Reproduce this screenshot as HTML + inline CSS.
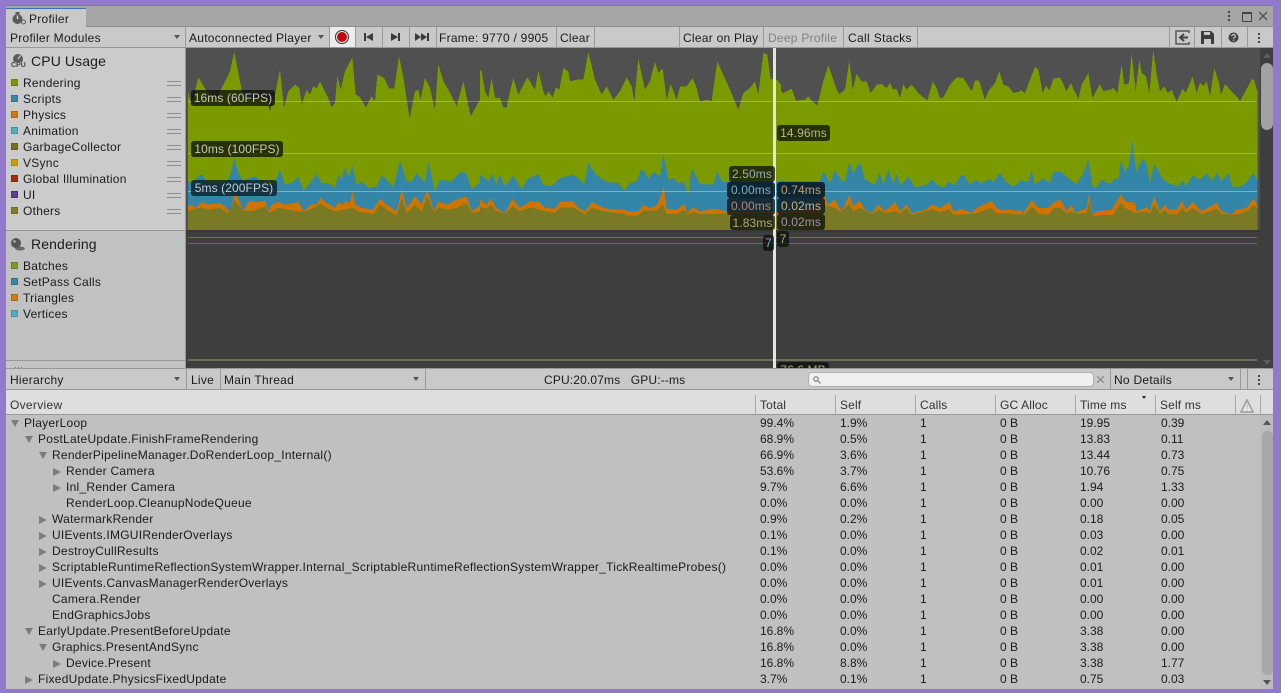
<!DOCTYPE html>
<html><head><meta charset="utf-8"><style>
html,body{margin:0;padding:0;width:1281px;height:693px;overflow:hidden;background:#9279cc}
body{font-family:"Liberation Sans",sans-serif;font-size:12px;color:#1a1a1a;position:relative;letter-spacing:.26px}
div,span,svg{position:absolute}
.t{white-space:nowrap;line-height:16px;height:16px}
.b{background:#c9c9c9}
.s{width:1px;background:#999}
.sw{width:7px;height:7px;left:11px;border:1px solid rgba(0,0,0,.15);box-sizing:border-box}
.h1,.h2{left:167px;width:14px;height:1px;background:#8f8f8f}
.ar{width:0;height:0;border-left:3.5px solid transparent;border-right:3.5px solid transparent;border-top:4px solid #555}
.dn{width:0;height:0;border-left:4.5px solid transparent;border-right:4.5px solid transparent;border-top:7px solid #7c7c7c}
.rt{width:0;height:0;border-top:4px solid transparent;border-bottom:4px solid transparent;border-left:8px solid #7c7c7c}
.l{border-radius:3px;background:rgba(10,12,8,.74);height:16px;line-height:16px;font-size:12px;white-space:nowrap;text-align:center;letter-spacing:.1px}
.r{left:0;width:1281px;height:16px}
.r span{white-space:nowrap;line-height:16px;top:0}
.a,.c,.d,.e,.f,.g{letter-spacing:0}
.a{left:760px}.c{left:840px}.d{left:920px}.e{left:1000px}.f{left:1080px}.g{left:1161px}
.hd{top:397px;line-height:16px;color:#333;white-space:nowrap;letter-spacing:.15px}
.sp{width:1px;background:#a8a8a8;top:395px;height:19px}
</style></head><body>

<!-- window -->
<div style="left:6px;top:5px;width:1267px;height:684px;background:#c0c0c0"></div>
<div style="left:6px;top:6px;width:1267px;height:21px;background:#a5a5a5"></div>
<div style="left:6px;top:5px;width:1267px;height:1px;background:#85809a"></div>
<div style="left:6px;top:26px;width:1267px;height:1px;background:#8f8f8f"></div>
<div style="left:6px;top:8px;width:80px;height:19px;background:#c9c9c9"></div>
<div style="left:6px;top:8px;width:80px;height:1px;background:#3a72b0"></div>
<svg style="left:11px;top:11px" width="16" height="15" viewBox="0 0 16 15"><circle cx="6.5" cy="8" r="5" fill="#5a5a5a"/><rect x="4.5" y="1" width="4" height="2" fill="#5a5a5a"/><path d="M6.5 8V4.5" stroke="#ddd" stroke-width="1.4"/><circle cx="12.5" cy="11" r="2" fill="none" stroke="#5a5a5a"/></svg>
<div class="t" style="left:29px;top:11px;color:#202020">Profiler</div>
<div style="left:1228px;top:11px;width:2px;height:2px;background:#444;box-shadow:0 4px #444,0 8px #444"></div>
<div style="left:1242px;top:12px;width:8px;height:7px;border:1px solid #444;border-top-width:2px"></div>
<svg style="left:1258px;top:11px" width="10" height="10"><path d="M1 1L9 9M9 1L1 9" stroke="#555" stroke-width="1.3"/></svg>

<!-- top toolbar -->
<div class="b" style="left:6px;top:27px;width:1267px;height:20px"></div>
<div style="left:6px;top:47px;width:1267px;height:1px;background:#999"></div>
<div class="t" style="left:10px;top:30px">Profiler Modules</div>
<div class="ar" style="left:174px;top:35px"></div>
<div class="s" style="left:185px;top:27px;height:20px"></div>
<div class="t" style="left:189px;top:30px">Autoconnected Player</div>
<div class="ar" style="left:318px;top:35px"></div>
<div style="left:330px;top:27px;width:25px;height:20px;background:#ececec"></div>
<div style="left:335px;top:30px;width:12px;height:12px;border:1px solid #333;border-radius:50%"></div>
<div style="left:337px;top:32px;width:10px;height:10px;background:#c00a14;border-radius:50%"></div>
<div class="s" style="left:329px;top:27px;height:20px"></div>
<div class="s" style="left:355px;top:27px;height:20px"></div>
<div class="s" style="left:382px;top:27px;height:20px"></div>
<div class="s" style="left:409px;top:27px;height:20px"></div>
<div class="s" style="left:436px;top:27px;height:20px"></div>
<svg style="left:363px;top:32px" width="68" height="10"><path d="M1 1h2v8H1zM3 5l7-4v8z" fill="#3c3c3c"/><path d="M28 1l7 4-7 4zM35 1h2v8h-2z" fill="#3c3c3c"/><path d="M52 1l6 4-6 4zM58 1l6 4-6 4zM64 1h2v8h-2z" fill="#3c3c3c"/></svg>
<div class="t" style="left:439px;top:30px">Frame: 9770 / 9905</div>
<div class="s" style="left:556px;top:27px;height:20px"></div>
<div class="t" style="left:560px;top:30px">Clear</div>
<div class="s" style="left:594px;top:27px;height:20px"></div>
<div class="s" style="left:679px;top:27px;height:20px"></div>
<div class="t" style="left:683px;top:30px">Clear on Play</div>
<div class="s" style="left:763px;top:27px;height:20px"></div>
<div class="t" style="left:768px;top:30px;color:#808080">Deep Profile</div>
<div class="s" style="left:843px;top:27px;height:20px"></div>
<div class="t" style="left:848px;top:30px;letter-spacing:.35px">Call Stacks</div>
<div class="s" style="left:917px;top:27px;height:20px"></div>
<div class="s" style="left:1169px;top:27px;height:20px"></div>
<div class="s" style="left:1194px;top:27px;height:20px"></div>
<div class="s" style="left:1221px;top:27px;height:20px"></div>
<div class="s" style="left:1247px;top:27px;height:20px"></div>
<svg style="left:1175px;top:30px" width="15" height="15"><path d="M14 3V1H1v13h13v-2" fill="none" stroke="#555" stroke-width="1.5"/><path d="M13 7.5H6M9 4L5 7.5 9 11" fill="none" stroke="#444" stroke-width="2"/></svg>
<svg style="left:1201px;top:31px" width="13" height="13"><path d="M0 0h10l3 3v10H0z" fill="#3c3c3c"/><rect x="3" y="1" width="6" height="3" fill="#c9c9c9"/><rect x="3" y="8" width="7" height="5" fill="#c9c9c9"/></svg>
<svg style="left:1228px;top:32px" width="11" height="11"><circle cx="5.5" cy="5.5" r="5" fill="#444"/><path d="M3.8 4.2c0-2.2 3.6-2.2 3.6-.1 0 1.4-1.9 1.3-1.9 2.6" stroke="#ccc" fill="none" stroke-width="1.2"/><rect x="4.9" y="7.6" width="1.3" height="1.3" fill="#ccc"/></svg>
<div style="left:1258px;top:33px;width:2px;height:2px;background:#444;box-shadow:0 4px #444,0 8px #444"></div>

<!-- left column -->
<div style="left:6px;top:48px;width:179px;height:183px;background:#cbcbcb"></div>
<div style="left:6px;top:230px;width:179px;height:1px;background:#999"></div>
<div style="left:6px;top:231px;width:179px;height:129px;background:#c1c1c1"></div>
<div style="left:6px;top:360px;width:179px;height:9px;background:#c4c4c4;border-top:1px solid #999;box-sizing:border-box"></div>
<div style="left:185px;top:48px;width:1px;height:321px;background:#999"></div>
<svg style="left:10px;top:52px" width="16" height="12"><circle cx="8" cy="7" r="5" fill="#5a5a5a"/><path d="M8 7l2.5-3.5" stroke="#ccc" stroke-width="1.2"/><rect x="3" y="10" width="10" height="2" fill="#cbcbcb"/></svg>
<div class="t" style="left:11px;top:58px;font-size:7px;color:#444;font-weight:bold;letter-spacing:0">CPU</div>
<div class="t" style="left:31px;top:53px;font-size:14px;color:#1c1c1c;letter-spacing:.12px">CPU Usage</div>
<div class="sw" style="top:79px;background:#7d9a00"></div><div class="t" style="left:23px;top:75px">Rendering</div><div class="h1" style="top:81px"></div><div class="h2" style="top:85px"></div>
<div class="sw" style="top:95px;background:#3a88a8"></div><div class="t" style="left:23px;top:91px">Scripts</div><div class="h1" style="top:97px"></div><div class="h2" style="top:101px"></div>
<div class="sw" style="top:111px;background:#d07a10"></div><div class="t" style="left:23px;top:107px">Physics</div><div class="h1" style="top:113px"></div><div class="h2" style="top:117px"></div>
<div class="sw" style="top:127px;background:#4cb0c0"></div><div class="t" style="left:23px;top:123px">Animation</div><div class="h1" style="top:129px"></div><div class="h2" style="top:133px"></div>
<div class="sw" style="top:143px;background:#7a7020"></div><div class="t" style="left:23px;top:139px">GarbageCollector</div><div class="h1" style="top:145px"></div><div class="h2" style="top:149px"></div>
<div class="sw" style="top:159px;background:#c8a000"></div><div class="t" style="left:23px;top:155px">VSync</div><div class="h1" style="top:161px"></div><div class="h2" style="top:165px"></div>
<div class="sw" style="top:175px;background:#a03010"></div><div class="t" style="left:23px;top:171px">Global Illumination</div><div class="h1" style="top:177px"></div><div class="h2" style="top:181px"></div>
<div class="sw" style="top:191px;background:#5a4090"></div><div class="t" style="left:23px;top:187px">UI</div><div class="h1" style="top:193px"></div><div class="h2" style="top:197px"></div>
<div class="sw" style="top:207px;background:#808020"></div><div class="t" style="left:23px;top:203px">Others</div><div class="h1" style="top:209px"></div><div class="h2" style="top:213px"></div>

<svg style="left:10px;top:236px" width="16" height="16"><ellipse cx="10" cy="12.5" rx="5" ry="2" fill="#6a6a6a"/><circle cx="6" cy="7" r="5" fill="#555"/><circle cx="4.5" cy="5.5" r="1.5" fill="#999"/></svg>
<div class="t" style="left:31px;top:236px;font-size:14px;color:#1c1c1c;letter-spacing:.12px">Rendering</div>
<div class="sw" style="top:262px;background:#7f9a20"></div><div class="t" style="left:23px;top:258px">Batches</div>
<div class="sw" style="top:278px;background:#3a88a8"></div><div class="t" style="left:23px;top:274px">SetPass Calls</div>
<div class="sw" style="top:294px;background:#d07a10"></div><div class="t" style="left:23px;top:290px">Triangles</div>
<div class="sw" style="top:310px;background:#4cb0c0"></div><div class="t" style="left:23px;top:306px">Vertices</div>
<div class="t" style="left:14px;top:358px;font-size:10px;color:#777">...</div>

<!-- charts -->
<div style="left:186px;top:48px;width:1074px;height:183px;background:#505050"></div>
<div style="left:186px;top:231px;width:1074px;height:138px;background:#3e3e3e"></div>
<div style="left:186px;top:230px;width:1074px;height:2px;background:#383838"></div>
<svg style="left:0;top:0" width="1281" height="693" shape-rendering="crispEdges">
<g transform="translate(180 48) scale(.33333)">
<polygon fill="#7b9a00" points="24,546 24,130 35,175 55,88 80,130 110,150 150,70 163,12 180,100 190,150 260,150 270,190 285,140 300,65 312,180 325,130 345,110 358,120 365,170 380,125 390,140 400,115 410,120 420,100 445,150 455,178 465,165 472,85 482,125 495,70 517,28 527,140 538,145 558,178 575,145 585,160 592,80 612,90 628,122 643,122 657,25 672,100 689,212 705,130 715,125 722,155 735,90 750,120 765,185 775,50 790,100 805,125 830,175 850,100 872,205 903,150 903,546"/>
<polygon fill="#3386a8" points="24,546 24,400 35,405 55,385 65,378 80,400 100,405 140,400 150,385 163,330 175,375 190,400 205,390 225,385 258,410 280,410 300,365 315,410 335,405 355,385 370,428 390,405 410,378 425,405 445,405 465,420 475,380 485,395 495,358 505,385 518,355 530,410 545,400 565,420 590,415 605,382 625,400 640,420 660,338 680,400 695,400 710,375 735,405 745,340 765,430 780,395 815,400 845,370 860,378 875,425 903,400 903,546"/>
<polygon fill="#d07400" points="24,546 24,475 35,470 45,480 65,462 85,470 100,468 120,465 135,475 150,495 163,440 172,445 190,490 205,462 220,460 235,462 255,458 265,490 275,470 295,462 315,470 340,465 355,462 370,490 395,468 408,470 422,450 440,465 465,480 475,462 490,470 497,458 510,465 517,430 527,470 545,480 580,485 600,452 620,470 650,490 665,425 680,480 705,445 725,470 742,425 762,490 775,460 800,470 830,455 860,445 875,490 890,480 903,470 903,546"/>
<polygon fill="#7a7a24" points="24,546 24,490 35,485 65,478 85,485 120,480 145,497 163,455 190,490 220,488 255,475 268,495 295,480 340,488 370,492 395,482 422,468 440,480 465,490 490,485 517,480 540,492 580,498 600,470 620,485 650,502 665,450 680,495 705,470 725,490 742,445 762,495 775,478 800,485 830,480 860,465 875,495 903,490 903,546"/>
</g>
<g transform="translate(480 48) scale(.33333)">
<polygon fill="#7b9a00" points="0,546 0,65 5,70 15,130 25,150 35,90 45,150 60,150 70,178 80,178 90,130 100,90 115,140 142,88 165,125 175,68 190,130 197,145 205,130 218,148 228,118 238,125 250,60 265,70 270,100 290,95 310,95 325,12 345,95 365,140 380,115 400,155 420,130 440,88 455,115 463,160 475,33 495,125 510,100 525,42 535,75 548,62 560,155 572,108 590,155 600,115 620,115 638,90 650,120 660,160 680,155 695,160 712,40 725,70 750,125 775,185 790,135 810,120 825,100 835,140 850,15 862,20 872,95 885,90 903,110 903,546"/>
<polygon fill="#3386a8" points="0,546 0,380 25,400 38,378 50,410 58,378 75,415 100,382 125,425 140,395 175,378 190,410 215,415 240,390 280,380 300,395 312,410 325,345 350,382 380,402 415,405 432,428 450,405 470,400 485,360 505,392 520,372 540,385 550,318 565,395 580,390 595,405 610,400 625,437 635,360 660,408 700,410 712,368 725,400 750,400 885,400 903,400 903,546"/>
<polygon fill="#d07400" points="0,546 0,455 20,470 33,450 50,482 75,495 98,452 120,480 150,460 175,460 195,480 225,482 240,462 280,460 295,480 315,490 335,462 370,480 400,485 430,485 445,490 475,490 490,472 510,480 530,472 545,440 550,412 560,482 590,485 612,468 622,495 640,478 660,490 700,482 740,490 885,490 903,490 903,546"/>
<polygon fill="#7a7a24" points="0,546 0,478 20,482 33,470 50,490 75,497 98,475 120,490 150,478 195,490 225,495 240,478 280,478 315,498 335,480 370,490 430,497 445,503 475,503 490,488 530,488 548,470 560,498 590,498 612,485 622,498 640,492 660,498 885,495 903,495 903,546"/>
</g>
<g transform="translate(780 48) scale(.33333)">
<polygon fill="#7b9a00" points="0,546 0,125 10,135 35,122 48,158 75,155 85,145 95,158 112,172 130,100 145,52 160,95 172,130 178,138 195,125 208,38 218,125 230,78 245,100 260,100 272,135 290,110 305,108 320,120 330,105 340,125 350,122 360,150 370,108 380,125 395,110 415,135 442,158 458,100 470,120 480,150 490,148 510,110 530,88 550,90 575,130 585,98 597,98 615,155 625,130 645,105 658,70 670,110 685,115 700,135 723,130 723,546"/>
<polygon fill="#3386a8" points="0,546 0,398 120,400 130,368 150,405 165,365 185,400 195,400 208,342 220,378 235,348 243,350 255,395 285,410 298,375 310,410 325,365 338,405 350,378 362,412 385,385 405,418 440,410 455,395 470,410 490,420 505,402 525,412 542,382 552,382 570,410 585,395 605,405 630,392 640,403 660,375 680,403 700,415 723,400 723,546"/>
<polygon fill="#d07400" points="0,546 0,490 120,480 130,435 145,470 165,455 180,485 190,480 208,440 220,475 240,458 255,485 275,495 295,470 315,490 345,462 360,490 380,470 395,495 440,485 455,470 480,480 508,462 520,490 545,483 575,495 590,480 635,458 650,480 670,488 690,485 723,490 723,546"/>
<polygon fill="#7a7a24" points="0,546 0,495 120,495 130,470 165,480 180,492 208,468 220,490 240,480 275,498 295,485 315,495 345,490 360,497 380,480 395,500 455,485 480,492 508,485 520,500 575,498 590,495 635,480 650,495 690,497 723,500 723,546"/>
</g>
<g transform="translate(1020 48) scale(.33333)">
<polygon fill="#7b9a00" points="0,546 0,125 15,135 45,57 55,65 68,135 78,112 88,128 100,92 120,88 140,130 152,105 175,152 185,110 205,75 217,150 240,108 250,130 270,125 280,120 292,135 305,50 313,110 327,105 335,17 347,130 358,35 365,75 378,85 388,135 400,5 410,80 420,130 433,115 443,135 455,125 470,162 488,122 497,135 518,85 530,135 540,105 550,115 560,100 570,145 583,60 597,105 603,140 615,108 630,125 650,145 660,160 695,95 702,95 712,130 712,546"/>
<polygon fill="#3386a8" points="0,546 0,395 25,402 35,365 45,410 70,390 90,405 100,372 120,370 150,395 170,408 190,375 205,335 218,415 228,420 245,395 270,408 285,390 295,395 303,335 315,372 327,350 337,278 348,370 368,332 380,350 390,405 402,350 415,365 425,390 445,405 475,415 488,395 497,415 518,382 540,395 560,375 575,400 590,375 605,400 625,375 638,417 665,415 680,402 700,375 712,395 712,546"/>
<polygon fill="#d07400" points="0,546 0,482 10,497 35,455 55,480 85,480 102,462 122,455 140,490 155,470 165,495 200,480 207,437 217,500 230,490 275,485 303,438 315,460 345,465 350,490 380,478 390,490 402,445 420,490 435,470 445,485 470,485 487,458 497,485 518,462 545,490 590,465 605,490 635,500 650,485 680,480 700,452 712,470 712,546"/>
<polygon fill="#7a7a24" points="0,546 0,497 15,500 35,475 55,497 85,500 102,480 122,480 140,497 155,490 165,497 200,495 207,460 217,503 280,500 303,465 315,480 345,495 380,490 390,497 402,468 420,497 435,485 445,497 470,500 487,480 497,495 518,480 545,498 590,482 605,498 650,500 680,490 700,472 712,480 712,546"/>
</g>
</svg>
<div style="left:186px;top:48px;width:2px;height:182px;background:#505050"></div>
<div style="left:188px;top:101px;width:1069px;height:1px;background:rgba(255,255,255,.28)"></div>
<div style="left:188px;top:153px;width:1069px;height:1px;background:rgba(255,255,255,.28)"></div>
<div style="left:188px;top:191px;width:1069px;height:1px;background:rgba(255,255,255,.35)"></div>
<div style="left:188px;top:237px;width:1069px;height:1px;background:#74742c"></div>
<div style="left:188px;top:243px;width:1069px;height:1px;background:#2f7f9a"></div>
<div style="left:188px;top:359px;width:1069px;height:2px;background:#66725a"></div>
<div style="left:773px;top:48px;width:3px;height:321px;background:#e6e6d8"></div>

<div class="l" style="left:191px;top:90px;width:84px;color:#c8c8b8">16ms (60FPS)</div>
<div class="l" style="left:191px;top:141px;width:92px;color:#c8c8b8">10ms (100FPS)</div>
<div class="l" style="left:191px;top:180px;width:86px;color:#c0ccd2;background:rgba(8,20,28,.74)">5ms (200FPS)</div>
<div class="l" style="left:777px;top:125px;width:53px;color:#b0b88c">14.96ms</div>
<div class="l" style="left:729px;top:166px;width:46px;color:#94acb8">2.50ms</div>
<div class="l" style="left:727px;top:182px;width:48px;color:#86aabc;background:rgba(5,20,30,.85)">0.00ms</div>
<div class="l" style="left:727px;top:198px;width:48px;color:#b08a80;background:rgba(15,20,25,.8);height:17px">0.00ms</div>
<div class="l" style="left:730px;top:215px;width:45px;color:#a8a888;height:15px">1.83ms</div>
<div class="l" style="left:777px;top:182px;width:48px;color:#c0a070;background:rgba(5,20,30,.85)">0.74ms</div>
<div class="l" style="left:777px;top:198px;width:48px;color:#bdb586;background:rgba(15,20,25,.8)">0.02ms</div>
<div class="l" style="left:777px;top:214px;width:48px;color:#a090b0">0.02ms</div>
<div class="l" style="left:763px;top:235px;width:11px;color:#86aabc">7</div>
<div class="l" style="left:777px;top:231px;width:12px;color:#a8a878">7</div>
<div class="l" style="left:777px;top:362px;width:52px;height:7px;overflow:hidden;color:#a8a878;border-radius:3px 3px 0 0">76.6 MB</div>

<!-- chart scrollbar -->
<div style="left:1260px;top:48px;width:13px;height:321px;background:#3e3e3e"></div>
<div style="left:1263px;top:53px;width:0;height:0;border-left:4px solid transparent;border-right:4px solid transparent;border-bottom:5px solid #5c5c5c"></div>
<div style="left:1261px;top:63px;width:12px;height:67px;background:#a2a2a2;border-radius:6px"></div>
<div style="left:1263px;top:360px;width:0;height:0;border-left:4px solid transparent;border-right:4px solid transparent;border-top:5px solid #5c5c5c"></div>

<!-- hierarchy toolbar -->
<div class="b" style="left:6px;top:369px;width:1267px;height:20px"></div>
<div style="left:6px;top:368px;width:1267px;height:1px;background:#999"></div>
<div style="left:6px;top:389px;width:1267px;height:1px;background:#999"></div>
<div class="t" style="left:10px;top:372px">Hierarchy</div>
<div class="ar" style="left:174px;top:377px"></div>
<div class="s" style="left:186px;top:369px;height:20px"></div>
<div class="t" style="left:191px;top:372px">Live</div>
<div class="s" style="left:220px;top:369px;height:20px"></div>
<div class="t" style="left:224px;top:372px">Main Thread</div>
<div class="ar" style="left:413px;top:377px"></div>
<div class="s" style="left:425px;top:369px;height:20px"></div>
<div class="t" style="left:544px;top:372px;letter-spacing:.15px">CPU:20.07ms &nbsp; GPU:--ms</div>
<div style="left:808px;top:372px;width:286px;height:15px;background:#f0f0f0;border:1px solid #b0b0b0;box-sizing:border-box;border-radius:4px"></div>
<svg style="left:813px;top:376px" width="8" height="8"><circle cx="3" cy="3" r="2.2" fill="none" stroke="#666"/><path d="M5 5l2.5 2.5" stroke="#666"/></svg>
<svg style="left:1097px;top:376px" width="7" height="7"><path d="M0 0l7 7M7 0L0 7" stroke="#8a8a8a" stroke-width="1.3"/></svg>
<div class="s" style="left:1110px;top:369px;height:20px"></div>
<div class="t" style="left:1114px;top:372px">No Details</div>
<div class="ar" style="left:1228px;top:377px"></div>
<div class="s" style="left:1240px;top:369px;height:20px"></div>
<div class="s" style="left:1247px;top:369px;height:20px"></div>
<div style="left:1258px;top:375px;width:2px;height:2px;background:#444;box-shadow:0 4px #444,0 8px #444"></div>

<!-- header -->
<div style="left:6px;top:390px;width:1267px;height:24px;background:#dedede"></div>
<div style="left:6px;top:414px;width:1267px;height:1px;background:#9a9a9a"></div>
<div class="hd" style="left:10px;letter-spacing:.3px">Overview</div>
<div class="sp" style="left:755px"></div><div class="hd" style="left:760px">Total</div>
<div class="sp" style="left:835px"></div><div class="hd" style="left:840px">Self</div>
<div class="sp" style="left:915px"></div><div class="hd" style="left:920px">Calls</div>
<div class="sp" style="left:995px"></div><div class="hd" style="left:1000px">GC Alloc</div>
<div class="sp" style="left:1075px"></div><div class="hd" style="left:1080px">Time ms</div>
<div class="sp" style="left:1155px"></div><div class="hd" style="left:1160px">Self ms</div>
<div class="sp" style="left:1235px"></div><div class="sp" style="left:1260px"></div>
<div style="left:1142px;top:396px;width:0;height:0;border-left:2px solid transparent;border-right:2px solid transparent;border-top:3px solid #222"></div>
<svg style="left:1240px;top:399px" width="14" height="14"><path d="M7 1L13 13H1z" fill="#e8e8e8" stroke="#9a9a9a" stroke-width="1.5"/><path d="M7 5v4.5M7 10.5v1.2" stroke="#c4c4c4" stroke-width="1.4"/></svg>

<!-- rows -->
<div class="dn" style="left:11px;top:420px"></div>
<div class="dn" style="left:25px;top:436px"></div>
<div class="dn" style="left:39px;top:452px"></div>
<div class="rt" style="left:53px;top:468px"></div>
<div class="rt" style="left:53px;top:484px"></div>
<div class="rt" style="left:39px;top:516px"></div>
<div class="rt" style="left:39px;top:532px"></div>
<div class="rt" style="left:39px;top:548px"></div>
<div class="rt" style="left:39px;top:564px"></div>
<div class="rt" style="left:39px;top:580px"></div>
<div class="dn" style="left:25px;top:628px"></div>
<div class="dn" style="left:39px;top:644px"></div>
<div class="rt" style="left:53px;top:660px"></div>
<div class="rt" style="left:25px;top:676px"></div>

<div class="r" style="top:415px"><span style="left:24px">PlayerLoop</span><span class="a">99.4%</span><span class="c">1.9%</span><span class="d">1</span><span class="e">0 B</span><span class="f">19.95</span><span class="g">0.39</span></div>
<div class="r" style="top:431px"><span style="left:38px">PostLateUpdate.FinishFrameRendering</span><span class="a">68.9%</span><span class="c">0.5%</span><span class="d">1</span><span class="e">0 B</span><span class="f">13.83</span><span class="g">0.11</span></div>
<div class="r" style="top:447px"><span style="left:52px">RenderPipelineManager.DoRenderLoop_Internal()</span><span class="a">66.9%</span><span class="c">3.6%</span><span class="d">1</span><span class="e">0 B</span><span class="f">13.44</span><span class="g">0.73</span></div>
<div class="r" style="top:463px"><span style="left:66px">Render Camera</span><span class="a">53.6%</span><span class="c">3.7%</span><span class="d">1</span><span class="e">0 B</span><span class="f">10.76</span><span class="g">0.75</span></div>
<div class="r" style="top:479px"><span style="left:66px">Inl_Render Camera</span><span class="a">9.7%</span><span class="c">6.6%</span><span class="d">1</span><span class="e">0 B</span><span class="f">1.94</span><span class="g">1.33</span></div>
<div class="r" style="top:495px"><span style="left:66px">RenderLoop.CleanupNodeQueue</span><span class="a">0.0%</span><span class="c">0.0%</span><span class="d">1</span><span class="e">0 B</span><span class="f">0.00</span><span class="g">0.00</span></div>
<div class="r" style="top:511px"><span style="left:52px">WatermarkRender</span><span class="a">0.9%</span><span class="c">0.2%</span><span class="d">1</span><span class="e">0 B</span><span class="f">0.18</span><span class="g">0.05</span></div>
<div class="r" style="top:527px"><span style="left:52px">UIEvents.IMGUIRenderOverlays</span><span class="a">0.1%</span><span class="c">0.0%</span><span class="d">1</span><span class="e">0 B</span><span class="f">0.03</span><span class="g">0.00</span></div>
<div class="r" style="top:543px"><span style="left:52px">DestroyCullResults</span><span class="a">0.1%</span><span class="c">0.0%</span><span class="d">1</span><span class="e">0 B</span><span class="f">0.02</span><span class="g">0.01</span></div>
<div class="r" style="top:559px"><span style="left:52px">ScriptableRuntimeReflectionSystemWrapper.Internal_ScriptableRuntimeReflectionSystemWrapper_TickRealtimeProbes()</span><span class="a">0.0%</span><span class="c">0.0%</span><span class="d">1</span><span class="e">0 B</span><span class="f">0.01</span><span class="g">0.00</span></div>
<div class="r" style="top:575px"><span style="left:52px">UIEvents.CanvasManagerRenderOverlays</span><span class="a">0.0%</span><span class="c">0.0%</span><span class="d">1</span><span class="e">0 B</span><span class="f">0.01</span><span class="g">0.00</span></div>
<div class="r" style="top:591px"><span style="left:52px">Camera.Render</span><span class="a">0.0%</span><span class="c">0.0%</span><span class="d">1</span><span class="e">0 B</span><span class="f">0.00</span><span class="g">0.00</span></div>
<div class="r" style="top:607px"><span style="left:52px">EndGraphicsJobs</span><span class="a">0.0%</span><span class="c">0.0%</span><span class="d">1</span><span class="e">0 B</span><span class="f">0.00</span><span class="g">0.00</span></div>
<div class="r" style="top:623px"><span style="left:38px">EarlyUpdate.PresentBeforeUpdate</span><span class="a">16.8%</span><span class="c">0.0%</span><span class="d">1</span><span class="e">0 B</span><span class="f">3.38</span><span class="g">0.00</span></div>
<div class="r" style="top:639px"><span style="left:52px">Graphics.PresentAndSync</span><span class="a">16.8%</span><span class="c">0.0%</span><span class="d">1</span><span class="e">0 B</span><span class="f">3.38</span><span class="g">0.00</span></div>
<div class="r" style="top:655px"><span style="left:66px">Device.Present</span><span class="a">16.8%</span><span class="c">8.8%</span><span class="d">1</span><span class="e">0 B</span><span class="f">3.38</span><span class="g">1.77</span></div>
<div class="r" style="top:671px"><span style="left:38px">FixedUpdate.PhysicsFixedUpdate</span><span class="a">3.7%</span><span class="c">0.1%</span><span class="d">1</span><span class="e">0 B</span><span class="f">0.75</span><span class="g">0.03</span></div>

<!-- lower scrollbar -->
<div style="left:1260px;top:415px;width:13px;height:274px;background:#bcbcbc"></div>
<div style="left:1263px;top:420px;width:0;height:0;border-left:4px solid transparent;border-right:4px solid transparent;border-bottom:5px solid #555"></div>
<div style="left:1262px;top:431px;width:11px;height:244px;background:#a8a8a8;border-radius:5px"></div>
<div style="left:1263px;top:680px;width:0;height:0;border-left:4px solid transparent;border-right:4px solid transparent;border-top:5px solid #555"></div>
</body></html>
